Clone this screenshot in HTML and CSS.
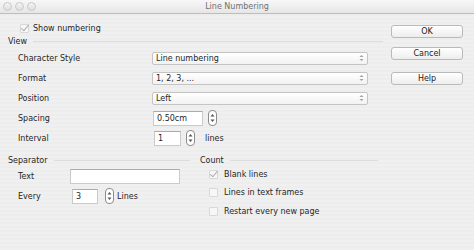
FILE: index.html
```html
<!doctype html>
<html lang="en">
<head>
    <meta charset="UTF-8">
    <title>Line Numbering</title>
    <link rel="stylesheet" href="styles.css">
</head>
<body>
<div class="window">
    <div class="titlebar">
        <div class="lights">
            <span class="light"></span>
            <span class="light"></span>
            <span class="light"></span>
        </div>
        <div class="title">Line Numbering</div>
    </div>
    <div class="body">
        <div class="main">
            <div class="check show-row">
                <span class="box checked"></span>
                <span>Show numbering</span>
            </div>
            <div class="heading">
                <span>View</span>
                <span class="rule"></span>
            </div>
            <div class="view-grid">
                <div class="label">Character Style</div>
                <div class="select">
                    <span>Line numbering</span>
                    <svg class="arrows" width="5" height="8" viewBox="0 0 5 8"><path d="M0.5 3 L2.5 1 L4.5 3 Z M0.5 5 L2.5 7 L4.5 5 Z" fill="#a0a0a0"/></svg>
                </div>
                <div class="label">Format</div>
                <div class="select">
                    <span>1, 2, 3, ...</span>
                    <svg class="arrows" width="5" height="8" viewBox="0 0 5 8"><path d="M0.5 3 L2.5 1 L4.5 3 Z M0.5 5 L2.5 7 L4.5 5 Z" fill="#a0a0a0"/></svg>
                </div>
                <div class="label">Position</div>
                <div class="select">
                    <span>Left</span>
                    <svg class="arrows" width="5" height="8" viewBox="0 0 5 8"><path d="M0.5 3 L2.5 1 L4.5 3 Z M0.5 5 L2.5 7 L4.5 5 Z" fill="#a0a0a0"/></svg>
                </div>
                <div class="label">Spacing</div>
                <div class="field-row">
                    <div class="field spacing-field">0.50cm</div>
                    <svg class="spin" width="9" height="16" viewBox="0 0 9 16"><rect x="0.5" y="0.5" width="8" height="15" rx="3.5" fill="#fff" stroke="#8c8c8c"/><path d="M2.5 6.5 L4.5 4 L6.5 6.5 Z M2.5 9.5 L4.5 12 L6.5 9.5 Z" fill="#555"/></svg>
                </div>
                <div class="label">Interval</div>
                <div class="field-row">
                    <div class="field small-field">1</div>
                    <svg class="spin" width="9" height="16" viewBox="0 0 9 16"><rect x="0.5" y="0.5" width="8" height="15" rx="3.5" fill="#fff" stroke="#8c8c8c"/><path d="M2.5 6.5 L4.5 4 L6.5 6.5 Z M2.5 9.5 L4.5 12 L6.5 9.5 Z" fill="#555"/></svg>
                    <span class="unit-wide">lines</span>
                </div>
            </div>
            <div class="bottom">
                <div class="separator">
                    <div class="heading">
                        <span>Separator</span>
                        <span class="rule"></span>
                    </div>
                    <div class="sep-grid">
                        <div class="label">Text</div>
                        <div class="field text-field"></div>
                        <div class="label">Every</div>
                        <div class="field-row every-row">
                            <div class="field small-field">3</div>
                            <svg class="spin" width="9" height="16" viewBox="0 0 9 16"><rect x="0.5" y="0.5" width="8" height="15" rx="3.5" fill="#fff" stroke="#8c8c8c"/><path d="M2.5 6.5 L4.5 4 L6.5 6.5 Z M2.5 9.5 L4.5 12 L6.5 9.5 Z" fill="#555"/></svg>
                            <span class="unit">Lines</span>
                        </div>
                    </div>
                </div>
                <div class="count">
                    <div class="heading">
                        <span>Count</span>
                        <span class="rule"></span>
                    </div>
                    <div class="check count-row">
                        <span class="box checked"></span>
                        <span>Blank lines</span>
                    </div>
                    <div class="check count-row">
                        <span class="box"></span>
                        <span>Lines in text frames</span>
                    </div>
                    <div class="check count-row">
                        <span class="box"></span>
                        <span>Restart every new page</span>
                    </div>
                </div>
            </div>
        </div>
        <div class="buttons">
            <div class="button ok">OK</div>
            <div class="button cancel">Cancel</div>
            <div class="button help">Help</div>
        </div>
    </div>
</div>
</body>
</html>
```

FILE: styles.css
```css
* {
    margin: 0;
    padding: 0;
    box-sizing: border-box;
}

html, body {
    width: 100%;
    height: 100%;
}

body {
    font-family: "DejaVu Sans", Verdana, sans-serif;
    font-size: 8px;
    color: #262626;
    background: #eeeeee;
}

.window {
    width: 474px;
    height: 250px;
    background: repeating-linear-gradient(#f0f0f0 0, #f0f0f0 2px, #ededed 2px, #ededed 4px);
}

.titlebar {
    position: relative;
    height: 14px;
    background: linear-gradient(#f7f7f7, #e6e6e6);
    border-bottom: 1px solid #bdbdbd;
    display: flex;
    align-items: center;
    justify-content: center;
}

.lights {
    position: absolute;
    left: 3px;
    top: 2px;
    display: flex;
    gap: 3px;
}

.light {
    width: 9px;
    height: 9px;
    border-radius: 50%;
    background: linear-gradient(#f4f4f4, #dedede);
    border: 1px solid #c8c8c8;
}

.title {
    color: #707070;
    font-size: 8px;
}

.body {
    display: flex;
    height: 236px;
}

.main {
    width: 383px;
    padding: 7px 0 0 8px;
}

.check {
    display: flex;
    align-items: center;
    gap: 5px;
}

.box {
    position: relative;
    width: 9px;
    height: 9px;
    border: 1px solid #d8d8d8;
    border-radius: 1px;
    background: #f7f7f7;
}

.box.checked::after {
    content: "";
    position: absolute;
    left: 2px;
    top: -2px;
    width: 3px;
    height: 7px;
    border-right: 1.5px solid #adadad;
    border-bottom: 1.5px solid #adadad;
    transform: rotate(40deg);
}

.show-row {
    height: 14px;
    padding-left: 12px;
    gap: 4px;
}

.heading {
    display: flex;
    align-items: center;
    height: 12px;
}

.rule {
    flex: 1;
    height: 1px;
    margin-left: 6px;
    background: #dcdcdc;
}

.view-grid {
    display: grid;
    grid-template-columns: 134px 216px;
    grid-auto-rows: 20px;
    align-items: center;
    margin-top: 1px;
    padding-left: 10px;
}

.select {
    height: 13px;
    border: 1px solid #c4c4c4;
    border-radius: 2px;
    background: linear-gradient(#ffffff, #f2f2f2);
    display: flex;
    align-items: center;
    justify-content: space-between;
    padding: 0 3px 0 3px;
}

.field-row {
    display: flex;
    align-items: center;
}

.field {
    height: 15px;
    border: 1px solid #cacaca;
    border-top-color: #ababab;
    background: #fff;
    display: flex;
    align-items: center;
    padding-left: 3px;
}

.spacing-field {
    width: 50px;
    margin-left: 1px;
}

.small-field {
    width: 27px;
    margin-left: 2px;
}

.spin {
    margin-left: 5px;
}

.unit-wide {
    margin-left: 10px;
}

.unit {
    margin-left: 3px;
}

.bottom {
    display: flex;
    margin-top: 5px;
}

.separator {
    width: 192px;
}

.separator .heading,
.count .heading {
    height: 14px;
}

.separator .rule {
    margin-right: 10px;
}

.sep-grid {
    display: grid;
    grid-template-columns: 52px 110px;
    grid-auto-rows: 20px;
    align-items: center;
    margin-top: -1px;
    padding-left: 10px;
}

.text-field {
    width: 110px;
}

.every-row .small-field {
    width: 26px;
}

.every-row .spin {
    margin-left: 7px;
}

.count {
    width: 180px;
}

.count .rule {
    margin-right: 2px;
}

.count-row {
    height: 18.5px;
    padding-left: 9px;
    gap: 6px;
}

.count-row:nth-child(2) {
    margin-top: -2px;
}

.buttons {
    display: flex;
    flex-direction: column;
    padding: 11px 0 0 8px;
}

.button {
    width: 72px;
    height: 13px;
    border: 1px solid #bababa;
    border-radius: 3px;
    background: linear-gradient(#ffffff, #ededed);
    display: flex;
    align-items: center;
    justify-content: center;
    color: #1c1c1c;
}

.cancel {
    margin-top: 9px;
}

.help {
    margin-top: 12px;
}
```
